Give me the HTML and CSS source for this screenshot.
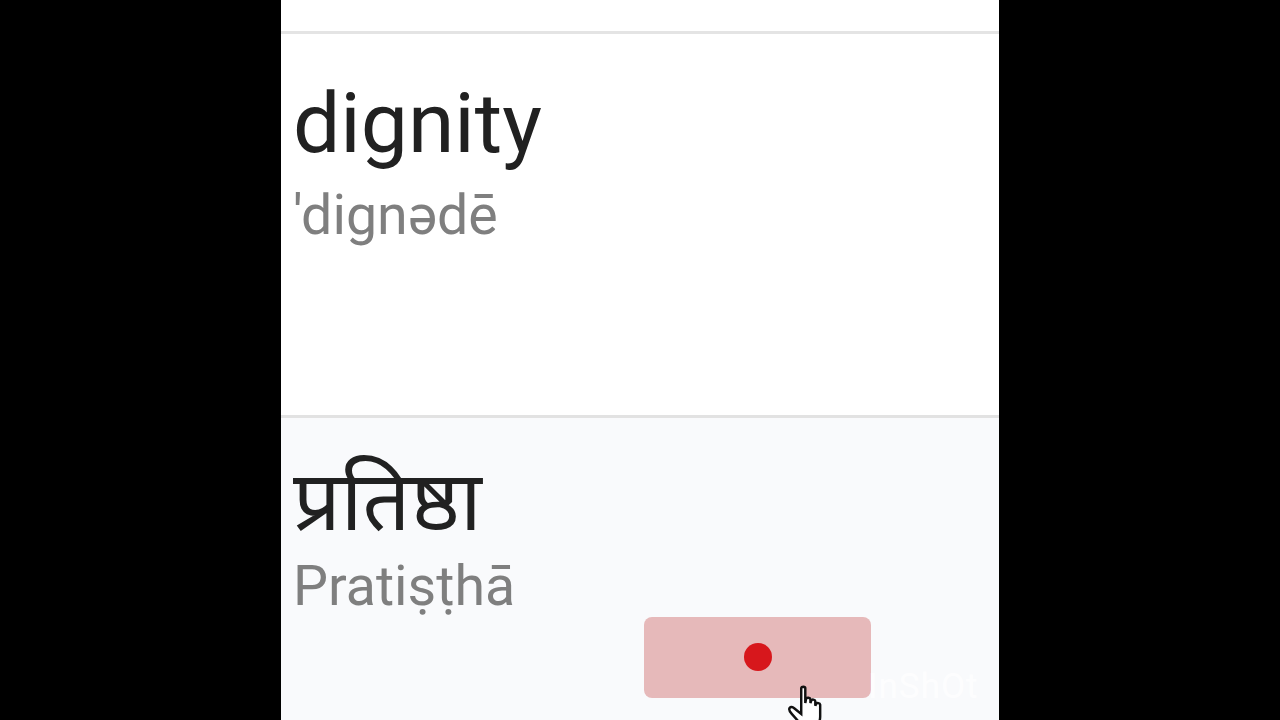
FILE: index.html
```html
<!DOCTYPE html>
<html>
<head>
    <title>Word card</title>
    <link rel="stylesheet" href="styles.css">
</head>
<body>
    <div class="canvas">
        <div class="top-strip"></div>
        <div class="entry entry-source">
            <div class="word">dignity</div>
            <div class="reading reading-source">'dignədē</div>
        </div>
        <div class="entry entry-target">
            <div class="word word-hindi" lang="hi">प्रतिष्ठा</div>
            <div class="reading">Pratiṣṭhā</div>

            <div class="record-button"><span class="record-dot"></span></div>
            <div class="watermark">InShOt</div>
            <svg class="hand-cursor" width="46" height="49" viewBox="0 0 17 18">
                <path d="M6 1.500c0-.7 1.500-.7 1.500 0V7l.3-1.600c.2-.6 1.500-.5 1.600.2V7l.3-.9c.2-.6 1.400-.5 1.500.2V8l.3-.7c.3-.5 1.400-.4 1.500.3v4.400c0 1.500-.4 2.400-1 3.500v2H6.500v-2L2.500 11c-.9-1-1.200-1.600-.8-2.200.4-.5 1.100-.4 1.700.1L6 11z" fill="#fff" stroke="#111" stroke-width="0.9"/>
            </svg>
        </div>
    </div>
</body>
</html>
```

FILE: styles.css
```css
body {
    margin: 0;
    height: 100vh;
    background-color: #000;
    display: flex;
    justify-content: center;
    overflow: hidden;
    font-family: Roboto, "Noto Sans", sans-serif;
}

.canvas {
    width: 718px;
    height: 720px;
    display: flex;
    flex-direction: column;
    background-color: #fff;
}

.top-strip {
    height: 31px;
    flex: none;
    border-bottom: 3px solid #e4e4e4;
}

.entry {
    padding-left: 12px;
    box-sizing: border-box;
}

.entry-source {
    height: 381px;
    padding-top: 42px;
    flex: none;
}

.entry-target {
    flex: 1;
    position: relative;
    overflow: hidden;
    border-top: 3px solid #e2e2e2;
    background-color: #f9fafc;
    padding-top: 28px;
}

.word {
    font-size: 84px;
    line-height: 96px;
    color: #212121;
}

.word-hindi {
    line-height: 111px;
}

.reading {
    font-size: 55.5px;
    line-height: 60px;
    color: #7f7f7f;
}

.reading-source {
    margin-top: 14px;
}

/* over the content, from the screen recorder */
.record-button {
    position: absolute;
    left: 363px;
    top: 199px;
    width: 227px;
    height: 81px;
    border-radius: 8px;
    background-color: #e6b9ba;
    display: flex;
    align-items: center;
    justify-content: center;
}

.record-dot {
    width: 28px;
    height: 28px;
    border-radius: 50%;
    background-color: #d7171c;
    margin-bottom: 1px;
}

.watermark {
    position: absolute;
    left: 587px;
    top: 248px;
    font-size: 35px;
    line-height: 42px;
    letter-spacing: 1px;
    color: rgba(255, 255, 255, 0.8);
}

.hand-cursor {
    position: absolute;
    left: 504px;
    top: 266px;
}
```
